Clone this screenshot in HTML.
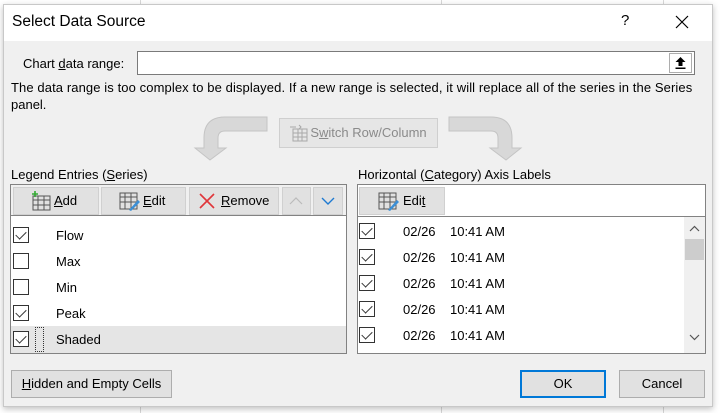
<!DOCTYPE html>
<html><head><style>
*{box-sizing:border-box;margin:0;padding:0}
body{width:721px;height:413px;overflow:hidden;background:#fff;font-family:"Segoe UI","Liberation Sans",sans-serif;font-size:13px;color:#000;position:relative}
.a{position:absolute}
.dlg{left:3px;top:4px;width:710px;height:403px;background:#f0f0f0;border:1px solid #c8c8c8;box-shadow:0 2px 6px rgba(0,0,0,.25)}
.btn{position:absolute;background:#e1e1e1;border:1px solid #adadad;text-align:center;line-height:26px}
.tb{position:absolute;background:#e1e1e1;border:1px solid #d0d0d0;height:28px;line-height:26px}
.cb{position:absolute;width:16px;height:16px;border:1px solid #333;background:#fff}
.cb.k::after{content:"";position:absolute;left:4px;top:1px;width:5px;height:9px;border:solid #333;border-width:0 1.2px 1.2px 0;transform:rotate(45deg)}
u{text-decoration:underline}
</style></head><body>
<div class="a" style="left:140px;top:0;width:1px;height:413px;background:#d8d8d8"></div>
<div class="a" style="left:441px;top:0;width:1px;height:413px;background:#d8d8d8"></div>
<div class="a" style="left:663px;top:0;width:1px;height:413px;background:#d8d8d8"></div>
<div class="a dlg"></div>
<div class="a" style="left:4px;top:5px;width:708px;height:36px;background:#fff"></div>
<div class="a" style="left:12px;top:13px;font-size:15.5px">Select Data Source</div>
<div class="a" style="left:621px;top:12px;font-size:15px">?</div>
<svg class="a" style="left:675px;top:15px" width="14" height="14"><path d="M1 1L13 13M13 1L1 13" stroke="#000" stroke-width="1.2"/></svg>

<div class="a" style="left:23px;top:56px">Chart <u>d</u>ata range:</div>
<div class="a" style="left:137px;top:51px;width:558px;height:24px;background:#fff;border:1px solid #7a7a7a"></div>
<div class="a" style="left:669px;top:53px;width:23px;height:20px;background:#fff;border:1px solid #adadad"></div>
<svg class="a" style="left:674px;top:56px" width="13" height="14"><path d="M6.5 1L1.5 6H4.5V10H8.5V6H11.5Z" fill="#000"/><rect x="1.5" y="11.5" width="10" height="1.5" fill="#000"/></svg>
<div class="a" style="left:11px;top:80px;white-space:nowrap;letter-spacing:0.1px">The data range is too complex to be displayed. If a new range is selected, it will replace all of the series in the Series</div>
<div class="a" style="left:11px;top:97px">panel.</div>

<svg class="a" style="left:190px;top:113px" width="340" height="52">
<path d="M77 4H35Q14 4 14 25V35H5L20 47L36 35H28V25Q28 18 35 18H77Z" fill="#d8d8d8" stroke="#c4c4c4"/>
<path d="M259 4H301Q322 4 322 25V35H331L316 47L300 35H308V25Q308 18 301 18H259Z" fill="#d8d8d8" stroke="#c4c4c4"/>
</svg>
<div class="btn" style="left:279px;top:118px;width:159px;height:30px;line-height:28px;color:#8a8a8a;border-color:#cfcfcf;background:#e6e6e6;padding-left:20px">S<u>w</u>itch Row/Column</div>
<svg class="a" style="left:287px;top:123px" width="22" height="20"><g stroke="#a8a8a8" fill="none"><rect x="6" y="6" width="14" height="12"/><path d="M6 10H20M6 14H20M11 6V18M15 6V18M3 4H9M12 2L14 4L12 6"/></g></svg>

<div class="a" style="left:11px;top:167px">Legend Entries (<u>S</u>eries)</div>
<div class="a" style="left:10px;top:184px;width:337px;height:170px;background:#fff;border:1px solid #828282"></div>
<div class="a" style="left:11px;top:185px;width:335px;height:31px;background:#f0f0f0;border-bottom:1px solid #828282"></div>
<div class="tb" style="left:13px;top:187px;width:86px;padding-left:40px"><u>A</u>dd</div>
<svg class="a" style="left:30px;top:190px" width="22" height="22"><g stroke="#555" fill="none"><rect x="3" y="6" width="17" height="14"/><path d="M3 10H20M3 15H20M8 6V20M14 6V20"/></g><path d="M5 1V7M2 4H8" stroke="#3a3" stroke-width="1.6"/></svg>
<div class="tb" style="left:101px;top:187px;width:85px;padding-left:41px"><u>E</u>dit</div>
<svg class="a" style="left:119px;top:190px" width="22" height="22"><g stroke="#555" fill="none"><rect x="1" y="3" width="17" height="16"/><path d="M1 7H18M1 12H18M6 3V19M12 3V19"/></g><path d="M10 20L19 10L21 12L12 21Z" fill="#3b8fd6"/></svg>
<div class="tb" style="left:189px;top:187px;width:90px;padding-left:31px"><u>R</u>emove</div>
<svg class="a" style="left:199px;top:193px" width="16" height="16"><path d="M1 1L15 15M15 1L1 15" stroke="#e0353a" stroke-width="1.6"/></svg>
<div class="tb" style="left:282px;top:187px;width:29px"></div>
<svg class="a" style="left:289px;top:196px" width="14" height="9"><path d="M1 8L7 2L13 8" stroke="#bbb" fill="none" stroke-width="1.2"/></svg>
<div class="tb" style="left:313px;top:187px;width:30px"></div>
<svg class="a" style="left:321px;top:197px" width="14" height="9"><path d="M1 1L7 7L13 1" stroke="#1f7ad1" fill="none" stroke-width="1.4"/></svg>

<div class="a" style="left:11px;top:326px;width:335px;height:27px;background:#e5e5e5"></div>
<div class="cb k" style="left:13px;top:227px"></div><div class="a" style="left:56px;top:228px">Flow</div>
<div class="cb" style="left:13px;top:253px"></div><div class="a" style="left:56px;top:254px">Max</div>
<div class="cb" style="left:13px;top:279px"></div><div class="a" style="left:56px;top:280px">Min</div>
<div class="cb k" style="left:13px;top:305px"></div><div class="a" style="left:56px;top:306px">Peak</div>
<div class="cb k" style="left:13px;top:331px"></div><div class="a" style="left:35px;top:327px;width:9px;height:25px;border:1px dotted #333"></div><div class="a" style="left:56px;top:332px">Shaded</div>

<div class="a" style="left:358px;top:167px">Horizontal (<u>C</u>ategory) Axis Labels</div>
<div class="a" style="left:357px;top:184px;width:349px;height:170px;background:#fff;border:1px solid #828282"></div>
<div class="a" style="left:358px;top:216px;width:347px;height:1px;background:#828282"></div>
<div class="tb" style="left:359px;top:187px;width:86px;padding-left:43px">Edi<u>t</u></div>
<svg class="a" style="left:378px;top:190px" width="22" height="22"><g stroke="#555" fill="none"><rect x="1" y="3" width="17" height="16"/><path d="M1 7H18M1 12H18M6 3V19M12 3V19"/></g><path d="M10 20L19 10L21 12L12 21Z" fill="#3b8fd6"/></svg>
<div class="cb k" style="left:359px;top:223px"></div><div class="a" style="left:403px;top:224px">02/26&nbsp;&nbsp;&nbsp; 10:41 AM</div>
<div class="cb k" style="left:359px;top:249px"></div><div class="a" style="left:403px;top:250px">02/26&nbsp;&nbsp;&nbsp; 10:41 AM</div>
<div class="cb k" style="left:359px;top:275px"></div><div class="a" style="left:403px;top:276px">02/26&nbsp;&nbsp;&nbsp; 10:41 AM</div>
<div class="cb k" style="left:359px;top:301px"></div><div class="a" style="left:403px;top:302px">02/26&nbsp;&nbsp;&nbsp; 10:41 AM</div>
<div class="cb k" style="left:359px;top:327px"></div><div class="a" style="left:403px;top:328px">02/26&nbsp;&nbsp;&nbsp; 10:41 AM</div>
<div class="a" style="left:684px;top:217px;width:21px;height:136px;background:#f0f0f0"></div>
<div class="a" style="left:685px;top:239px;width:19px;height:21px;background:#cdcdcd"></div>
<svg class="a" style="left:689px;top:225px" width="11" height="7"><path d="M1 6L5.5 1.5L10 6" stroke="#555" fill="none" stroke-width="1.2"/></svg>
<svg class="a" style="left:689px;top:334px" width="11" height="7"><path d="M1 1L5.5 5.5L10 1" stroke="#555" fill="none" stroke-width="1.2"/></svg>

<div class="btn" style="left:11px;top:370px;width:161px;height:28px"><u>H</u>idden and Empty Cells</div>
<div class="btn" style="left:520px;top:370px;width:86px;height:28px;border:2px solid #0078d7;line-height:24px">OK</div>
<div class="btn" style="left:619px;top:370px;width:86px;height:28px">Cancel</div>
</body></html>
